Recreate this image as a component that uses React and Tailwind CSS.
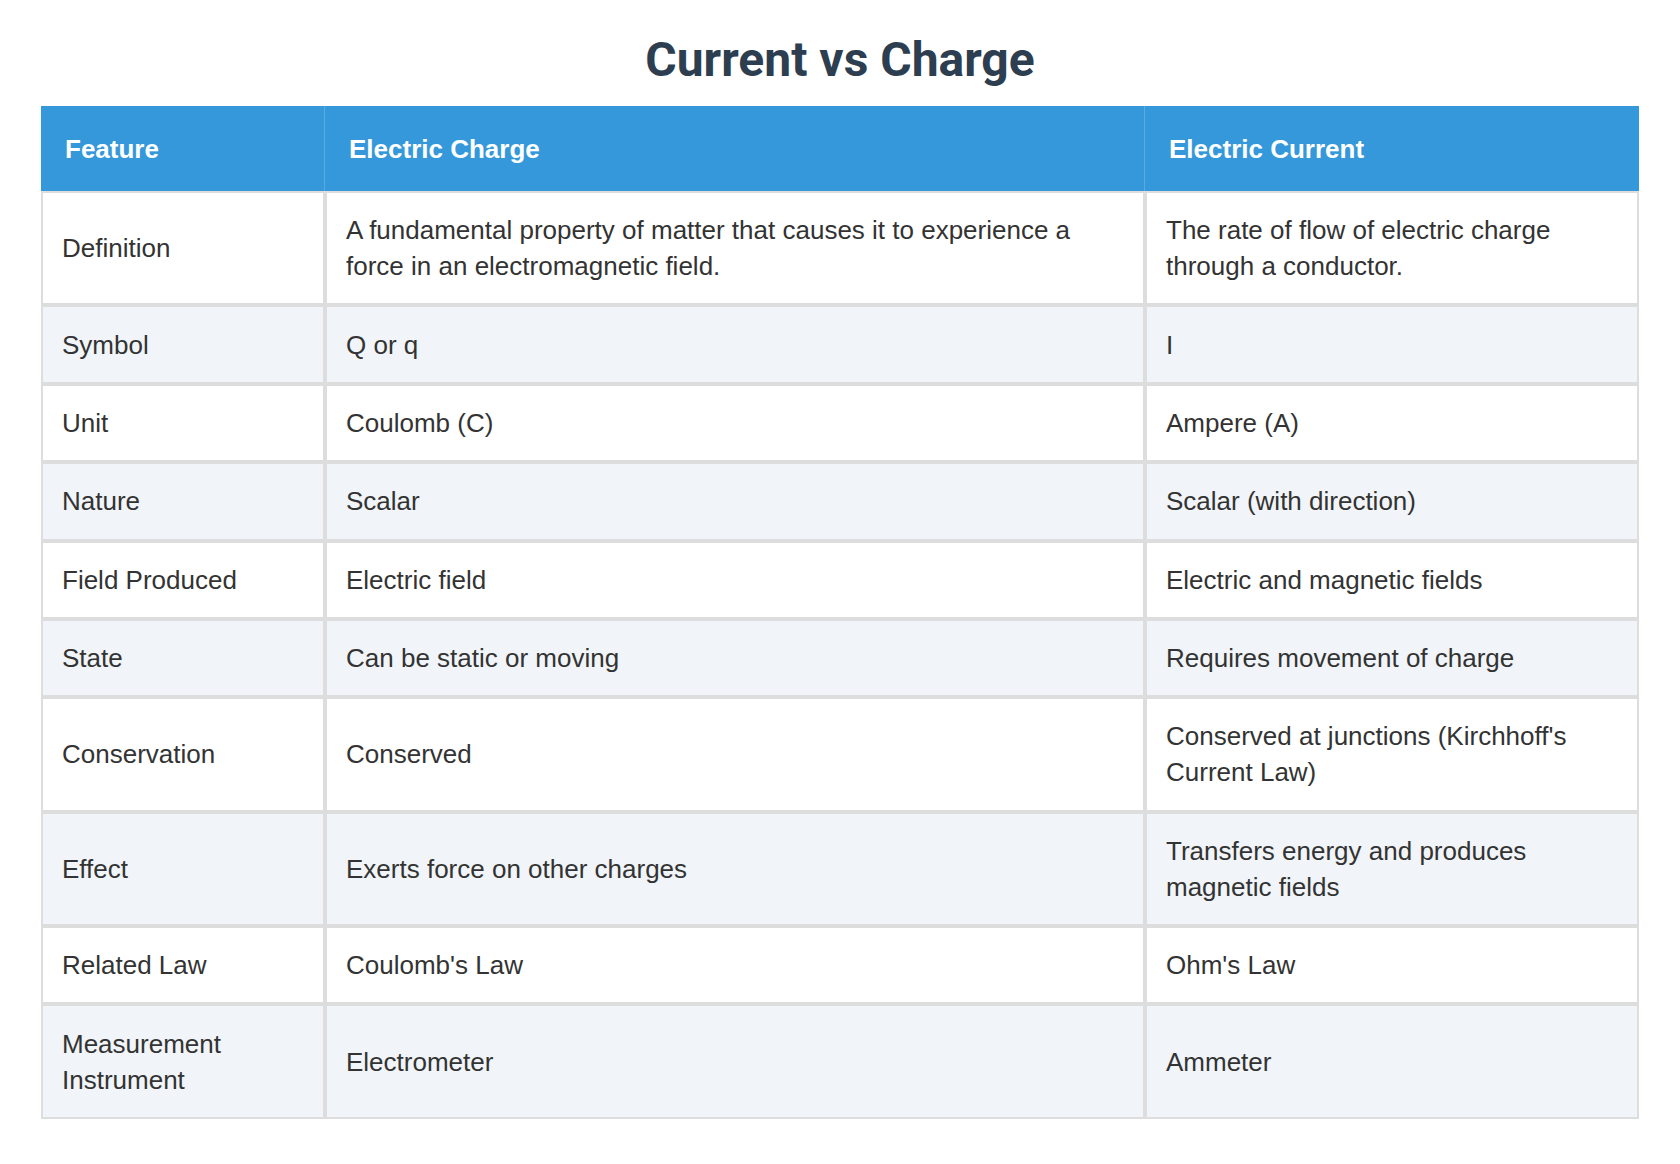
import React from "react";

const rows = [
  ["Definition", "A fundamental property of matter that causes it to experience a force in an electromagnetic field.", "The rate of flow of electric charge through a conductor."],
  ["Symbol", "Q or q", "I"],
  ["Unit", "Coulomb (C)", "Ampere (A)"],
  ["Nature", "Scalar", "Scalar (with direction)"],
  ["Field Produced", "Electric field", "Electric and magnetic fields"],
  ["State", "Can be static or moving", "Requires movement of charge"],
  ["Conservation", "Conserved", "Conserved at junctions (Kirchhoff's Current Law)"],
  ["Effect", "Exerts force on other charges", "Transfers energy and produces magnetic fields"],
  ["Related Law", "Coulomb's Law", "Ohm's Law"],
  ["Measurement Instrument", "Electrometer", "Ammeter"],
];

const headers = ["Feature", "Electric Charge", "Electric Current"];

const App = () => {
  return (
    <div className="min-h-[1164px] w-[1680px] bg-white px-[41px] pt-[32px] font-['Liberation_Sans',Arial,sans-serif]">
      <h1 className="mb-[18px] text-center font-['Roboto',sans-serif] text-[48px] font-bold leading-[56px] text-[#2c3e50]">
        Current vs Charge
      </h1>

      <div className="grid w-[1598px] grid-cols-[284px_820px_494px]">
        {headers.map((h, i) => (
          <div
            key={h}
            className={
              "bg-[#3498db] px-[24px] pt-[25px] pb-[24px] text-[26px] font-bold leading-[36px] text-white" +
              (i < 2 ? " border-r border-[#5aaae2]" : "")
            }
          >
            {h}
          </div>
        ))}

        {rows.map((row, r) =>
          row.map((cell, c) => (
            <div
              key={r + "-" + c}
              className={
                "flex items-center border-2 border-[#dddddd] px-[19px] py-[19.2px] text-[26px] leading-[36px] text-[#333333]" +
                (r % 2 === 1 ? " bg-[#f1f5f9]" : " bg-white")
              }
            >
              <span>{cell}</span>
            </div>
          ))
        )}
      </div>
    </div>
  );
};

export default App;
